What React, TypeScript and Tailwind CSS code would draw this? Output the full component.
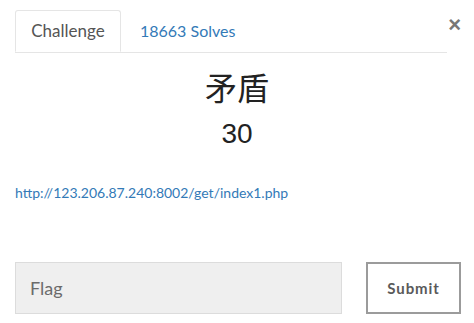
export default function App() {
  return (
    <div className="relative w-[474px] h-[323px] bg-white font-['Lato','Noto_Sans',sans-serif] overflow-hidden">
      <button className="absolute right-[13px] top-[14px] text-[22px] leading-none font-bold text-[#777] font-['Liberation_Sans',sans-serif]">
        ×
      </button>
      <div className="px-[15px] pt-[10px]">
        <div className="flex w-[432px] border-b border-[#e5e5e5]">
          <div className="h-[42px] w-[106px] -mb-px flex items-center justify-center rounded-t-[3px] border border-[#e5e5e5] border-b-white bg-white text-[17px] text-[#555]">
            Challenge
          </div>
          <div className="h-[42px] flex items-center pl-[19px] text-[16px] text-[#337ab7]">
            18663 Solves
          </div>
        </div>
        <div className="flex flex-col items-center mt-[14px] text-[#222] font-['Liberation_Sans','Noto_Sans_CJK_SC',sans-serif]">
          <h2 className="text-[32px] leading-[38px] font-['Noto_Sans_CJK_SC',sans-serif] font-normal">
            矛盾
          </h2>
          <h3 className="text-[28px] leading-[32px] mt-[13px]">30</h3>
        </div>
        <div className="mt-[30px]">
          <a href="#" className="text-[14px] leading-[20px] text-[#337ab7]">
            http://123.206.87.240:8002/get/index1.php
          </a>
        </div>
        <div className="flex items-center mt-[58px] gap-[24px]">
          <input
            placeholder="Flag"
            className="w-[327px] h-[52px] shrink-0 bg-[#efefef] border border-[#dcdcdc] px-[14px] text-[18px] text-[#555] placeholder:text-[#6b6b6b] focus:outline-none"
          />
          <button className="w-[95px] h-[52px] shrink-0 border-2 border-[#9b9b9b] bg-white text-[15px] font-bold tracking-[0.06em] text-[#5a5a5a]">
            Submit
          </button>
        </div>
      </div>
    </div>
  );
}
